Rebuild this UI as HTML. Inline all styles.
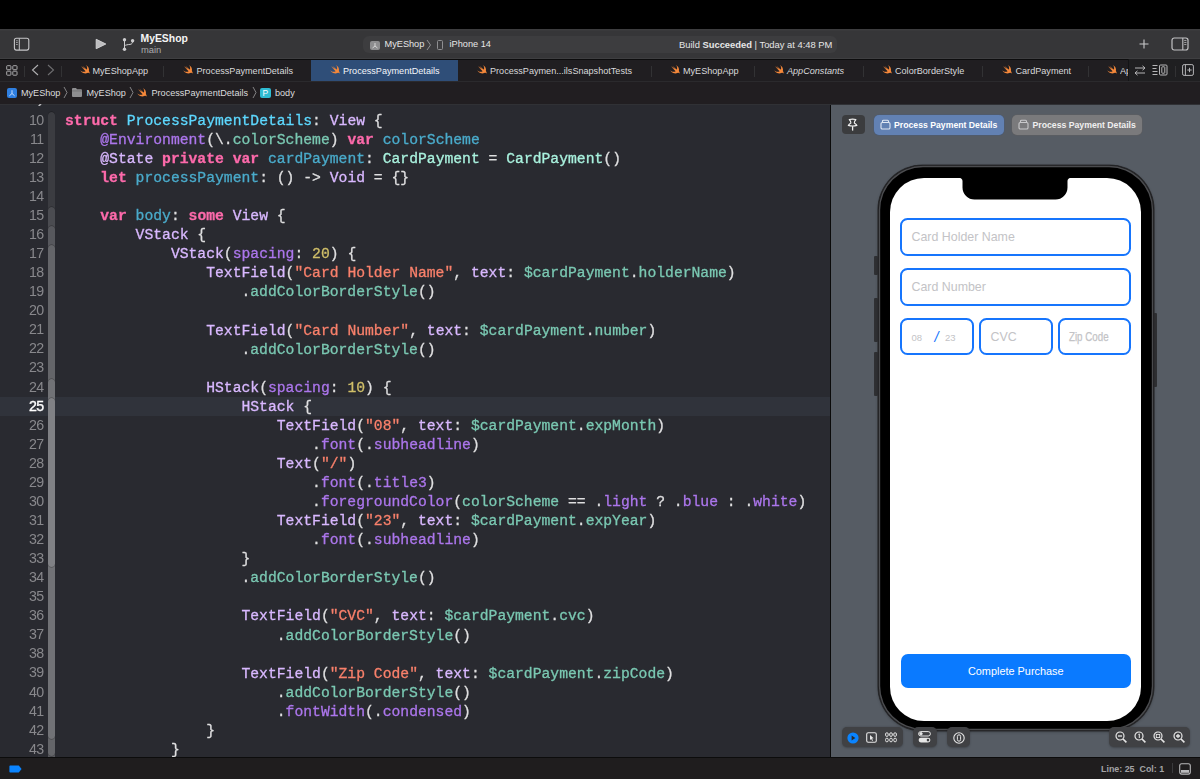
<!DOCTYPE html>
<html><head><meta charset="utf-8">
<style>
*{margin:0;padding:0;box-sizing:border-box}
html,body{width:1200px;height:779px;overflow:hidden;background:#000}
body{position:relative;font-family:"Liberation Sans",sans-serif;color:#ddd}
.abs{position:absolute}
#toolbar{left:0;top:29px;width:1200px;height:30px;background:#363638;box-shadow:inset 0 1.5px 0 #3d3d3f, inset 0 -1px 0 #3f3f41}
#tabs{left:0;top:59px;width:1200px;height:22px;background:#201e21;box-shadow:inset 0 1px 0 #0d0d0e}
#crumbs{left:0;top:81px;width:1200px;height:24px;background:#211e21;border-top:1px solid #2b2a2d;border-bottom:1px solid #303135}
#code{left:0;top:105px;width:830px;height:652px;background:#292a30;overflow:hidden}
#divider{left:830px;top:105px;width:1px;height:652px;background:#0a0a0a}
#preview{left:831px;top:105px;width:369px;height:652px;background:#565c64;overflow:hidden}
#status{left:0;top:757px;width:1200px;height:22px;background:#1f1d1e;border-top:1px solid #0c0c0c}
.curline{position:absolute;left:0;width:830px;height:19.06px;background:#30333b}
.ln{position:absolute;left:0;width:43.5px;height:19.06px;line-height:19.06px;text-align:right;font-family:"Liberation Sans",sans-serif;font-size:14.2px;letter-spacing:-0.6px;color:#88888c}
.ln.cur{color:#fff;-webkit-text-stroke:0.35px #fff}
.cl{position:absolute;left:65px;height:19.06px;line-height:19.06px;white-space:pre;font-family:"Liberation Mono",monospace;font-size:14.71px;color:#dfdfe0;-webkit-text-stroke:0.3px currentColor}
.k{color:#fd6aab;font-weight:bold}
.s{color:#f9806b}
.n{color:#d0bf69}
.td{color:#5dd8ff}
.od{color:#4aabcb}
.pt{color:#a9f2de}
.pf{color:#7ac8b2}
.ot{color:#d9b8ff}
.of{color:#ac76ec}
.sep{top:6.5px;width:1px;height:11px;background:#323234}
.sw{top:6px;width:10px;height:9px}
.tt{top:6.7px;font-size:9.1px;color:#d9d9db;white-space:nowrap}
.ct{top:5.6px;font-size:9.1px;color:#dcdcde;white-space:nowrap}
.chev{top:4px;width:6px;height:13px}
.pbt{top:15.1px;font-size:8.7px;font-weight:bold;color:#fff;white-space:nowrap}
.sbtn{width:4px;background:#2f3033;border-radius:1px}
.fld{border:2px solid #1675fd;border-radius:7.5px}
.ph{position:absolute;top:0;line-height:35px;font-size:12.4px;color:#c3c3c6;white-space:nowrap}
.ph.sm{font-size:9.5px}
.ph.cond{font-size:12.2px;transform:scaleX(0.8);transform-origin:0 50%;-webkit-text-stroke:0.25px #c3c3c6}
.ctl{height:19.5px;background:#404144;border-radius:5px;box-shadow:0 0.5px 2px rgba(0,0,0,0.25)}
.mag{top:625.5px;width:12px;height:12px}
.rib{position:absolute;left:47.5px;width:7px;border-radius:3.5px;box-shadow:0 -0.6px 0 rgba(0,0,0,0.4),0 0.6px 0 rgba(0,0,0,0.4)}
.cl,.ln{will-change:transform}

</style></head>
<body>
<svg width="0" height="0" style="position:absolute">
<defs>
<symbol id="swift" viewBox="2.2 3.2 18.6 17.4"><path fill="#f5883a" d="M13.543 3.41c4.114 2.47 6.545 7.162 5.549 11.131-.024.093-.05.181-.076.272l.002.001c2.062 2.538 1.5 5.258 1.236 4.745-1.072-2.086-3.066-1.568-4.088-1.043a6.803 6.803 0 0 1-.281.158l-.02.012-.002.002c-2.115 1.123-4.957 1.205-7.812-.022a12.568 12.568 0 0 1-5.64-4.838c.649.48 1.35.902 2.097 1.252 3.019 1.414 6.051 1.311 8.197-.002C9.651 12.73 7.101 9.670 5.146 7.191a10.628 10.628 0 0 1-1.005-1.384c2.340 2.142 6.038 4.830 7.365 5.576C8.690 8.408 6.208 4.743 6.324 4.860c4.436 4.470 8.528 6.996 8.528 6.996.154.085.270.154.360.213.085-.215.160-.437.224-.668.708-2.588-.090-5.548-1.893-7.992z"/></symbol>
<symbol id="magm" viewBox="0 0 12 12"><g fill="none" stroke="#e6e6e6" stroke-width="1.2"><circle cx="5" cy="5" r="4"/><path d="M8 8l3.4 3.4" stroke-width="1.6"/></g><path d="M3 5h4" stroke="#e6e6e6" stroke-width="1.3"/></symbol>
<symbol id="mag1" viewBox="0 0 12 12"><g fill="none" stroke="#e6e6e6" stroke-width="1.2"><circle cx="5" cy="5" r="4"/><path d="M8 8l3.4 3.4" stroke-width="1.6"/></g><path d="M4.4 3.4L5.3 2.9V7" fill="none" stroke="#e6e6e6" stroke-width="1"/></symbol>
<symbol id="magf" viewBox="0 0 12 12"><g fill="none" stroke="#e6e6e6" stroke-width="1.2"><circle cx="5" cy="5" r="4"/><path d="M8 8l3.4 3.4" stroke-width="1.6"/></g><rect x="3.3" y="3.4" width="3.4" height="3.2" fill="none" stroke="#e6e6e6" stroke-width="0.9"/></symbol>
<symbol id="magp" viewBox="0 0 12 12"><g fill="none" stroke="#e6e6e6" stroke-width="1.2"><circle cx="5" cy="5" r="4"/><path d="M8 8l3.4 3.4" stroke-width="1.6"/></g><path d="M3 5h4M5 3v4" stroke="#e6e6e6" stroke-width="1.3"/></symbol>
</defs>
</svg>
<div id="toolbar" class="abs">
  <svg class="abs" style="left:13px;top:8px" width="17" height="14" viewBox="0 0 17 14"><rect x="1.4" y="1.3" width="14.4" height="11.8" rx="2" fill="none" stroke="#c6c6c8" stroke-width="1.1"/><line x1="6.3" y1="1.3" x2="6.3" y2="13.1" stroke="#c6c6c8" stroke-width="1"/><rect x="3" y="3.4" width="1.8" height="0.8" fill="#b0b0b2"/><rect x="3" y="5.2" width="1.8" height="0.8" fill="#b0b0b2"/><rect x="3" y="7" width="1.8" height="0.8" fill="#b0b0b2"/></svg>
  <svg class="abs" style="left:95px;top:9px" width="12" height="12" viewBox="0 0 12 12"><path d="M1.2 1.3L10.8 6 1.2 10.7z" fill="#bdbdbf" stroke="#cfcfd1" stroke-width="1" stroke-linejoin="round"/></svg>
  <svg class="abs" style="left:121px;top:8px" width="14" height="14" viewBox="0 0 14 14"><g fill="#cdcdcf"><circle cx="3.5" cy="2.7" r="1.7"/><circle cx="3.5" cy="12.3" r="1.7"/><circle cx="11.6" cy="3.8" r="1.7"/></g><path d="M3.5 2.7V12.3M3.5 8.6C5 8 6.5 7.6 9 7.4 11 7.2 11.6 6 11.6 3.8" fill="none" stroke="#cdcdcf" stroke-width="1"/></svg>
  <div class="abs" style="left:140.5px;top:3.8px;font-size:10.4px;font-weight:bold;color:#f4f4f4">MyEShop</div>
  <div class="abs" style="left:141px;top:15px;font-size:9.4px;color:#ababad">main</div>
  <div class="abs" style="left:363px;top:7px;width:474px;height:17px;background:#3d3d3f;border-radius:6px"></div>
  <div class="abs" style="left:370px;top:11.5px;width:9.5px;height:9px;background:#8d8d8f;border-radius:2px"></div>
  <svg class="abs" style="left:370px;top:11.5px" width="10" height="9" viewBox="0 0 10 9"><g stroke="#dcdcdc" stroke-width="0.9" fill="none"><path d="M5 2v3M5 5L2.5 7M5 5l2.5 2"/></g></svg>
  <div class="abs" style="left:384.5px;top:10.4px;font-size:9.2px;color:#e6e6e6">MyEShop</div>
  <svg class="abs" style="left:426px;top:10px" width="6" height="12" viewBox="0 0 6 12"><path d="M1 1l3.5 5L1 11" fill="none" stroke="#9a9a9c" stroke-width="0.9"/></svg>
  <div class="abs" style="left:437px;top:11px;width:6px;height:10px;border:1.1px solid #8f8f91;border-radius:1.5px"></div>
  <div class="abs" style="left:449.5px;top:10.4px;font-size:9.2px;color:#e6e6e6">iPhone 14</div>
  <div class="abs" style="left:679px;top:10.2px;font-size:9.4px;color:#e6e6e6;white-space:nowrap">Build <b>Succeeded</b> | Today at 4:48 PM</div>
  <svg class="abs" style="left:1139px;top:10px" width="10" height="10" viewBox="0 0 10 10"><path d="M5 0.5v9M0.5 5h9" stroke="#c9c9cb" stroke-width="1.1"/></svg>
  <svg class="abs" style="left:1171px;top:8px" width="18" height="14" viewBox="0 0 18 14"><rect x="1" y="1" width="16" height="12" rx="2.2" fill="none" stroke="#c2c2c4" stroke-width="1.2"/><line x1="11.8" y1="1" x2="11.8" y2="13" stroke="#c2c2c4" stroke-width="1.1"/><rect x="13.2" y="3" width="2.2" height="0.9" fill="#a9a9ab"/><rect x="13.2" y="5" width="2.2" height="0.9" fill="#a9a9ab"/><rect x="13.2" y="7" width="2.2" height="0.9" fill="#a9a9ab"/></svg>
</div>
<div id="tabs" class="abs">
  <svg class="abs" style="left:6px;top:6px" width="12" height="11" viewBox="0 0 12 11"><g fill="none" stroke="#a9a9ab" stroke-width="1"><rect x="0.7" y="0.7" width="4.2" height="4" rx="0.6"/><rect x="6.8" y="0.7" width="4.2" height="4" rx="0.6"/><rect x="0.7" y="6.2" width="4.2" height="4" rx="0.6"/><rect x="6.8" y="6.2" width="4.2" height="4" rx="0.6"/></g></svg>
  <div class="abs sep" style="left:24px"></div>
  <svg class="abs" style="left:31px;top:5px" width="8" height="12" viewBox="0 0 8 12"><path d="M7 1L1.5 6 7 11" fill="none" stroke="#b0b0b2" stroke-width="1.1"/></svg>
  <svg class="abs" style="left:47px;top:5px" width="8" height="12" viewBox="0 0 8 12"><path d="M1 1l5.5 5L1 11" fill="none" stroke="#6e6e70" stroke-width="1.1"/></svg>
  <div class="abs sep" style="left:60.5px"></div>
  <svg class="abs sw" style="left:79.5px"><use href="#swift"/></svg><div class="abs tt" style="left:92.5px">MyEShopApp</div>
  <div class="abs sep" style="left:163px"></div>
  <svg class="abs sw" style="left:183px"><use href="#swift"/></svg><div class="abs tt" style="left:196.5px">ProcessPaymentDetails</div>
  <div class="abs" style="left:311px;top:1px;width:147px;height:22px;background:#2f4e78"></div>
  <svg class="abs sw" style="left:330px"><use href="#swift"/></svg><div class="abs tt" style="left:343px;color:#f4f6fa">ProcessPaymentDetails</div>
  <svg class="abs sw" style="left:476.5px"><use href="#swift"/></svg><div class="abs tt" style="left:490px">ProcessPaymen...ilsSnapshotTests</div>
  <div class="abs sep" style="left:651px"></div>
  <svg class="abs sw" style="left:670px"><use href="#swift"/></svg><div class="abs tt" style="left:683px">MyEShopApp</div>
  <div class="abs sep" style="left:754px"></div>
  <svg class="abs sw" style="left:774px"><use href="#swift"/></svg><div class="abs tt" style="left:787px;font-style:italic">AppConstants</div>
  <div class="abs sep" style="left:862.5px"></div>
  <svg class="abs sw" style="left:881.5px"><use href="#swift"/></svg><div class="abs tt" style="left:895px">ColorBorderStyle</div>
  <div class="abs sep" style="left:982px"></div>
  <svg class="abs sw" style="left:1001.5px"><use href="#swift"/></svg><div class="abs tt" style="left:1015.5px">CardPayment</div>
  <div class="abs sep" style="left:1087.5px"></div>
  <svg class="abs sw" style="left:1106.5px"><use href="#swift"/></svg><div class="abs tt" style="left:1120px;width:7.5px;overflow:hidden">AppConstants</div>
  <div class="abs" style="left:1127.5px;top:0;width:73px;height:22px;background:#1f1f21;border-left:1px solid #141416"></div>
  <svg class="abs" style="left:1134px;top:6px" width="12" height="11" viewBox="0 0 12 11"><g fill="none" stroke="#b5b5b7" stroke-width="1"><path d="M1 3h10M8.5 0.8L11 3 8.5 5.2M11 8H1M3.5 5.8L1 8l2.5 2.2"/></g></svg>
  <svg class="abs" style="left:1152px;top:5px" width="16" height="12" viewBox="0 0 16 12"><g fill="none" stroke="#b5b5b7" stroke-width="1"><path d="M0.5 1.5h5M0.5 4.5h4M0.5 7.5h5M0.5 10.5h5"/><rect x="7.5" y="1" width="7.5" height="10" rx="1"/><rect x="9.8" y="2.8" width="3" height="6.4" rx="0.6"/></g></svg>
  <div class="abs sep" style="left:1175px"></div>
  <svg class="abs" style="left:1181.5px;top:5px" width="12" height="12" viewBox="0 0 12 12"><g fill="none" stroke="#b5b5b7" stroke-width="1"><rect x="0.6" y="0.6" width="10.8" height="10.8" rx="1.5"/><path d="M3.4 0.6v10.8M7.5 3.8v4.4M5.3 6h4.4"/></g></svg>
</div>
<div id="crumbs" class="abs">
  <div class="abs" style="left:6.5px;top:5.5px;width:10px;height:10.5px;background:#2f7fe0;border-radius:2px"></div>
  <svg class="abs" style="left:6.5px;top:5.5px" width="10" height="10.5" viewBox="0 0 10 10.5"><g stroke="#d8e8ff" stroke-width="0.9" fill="none"><path d="M5 2.2v3.3M5 5.5L2.4 7.8M5 5.5l2.6 2.3"/></g></svg>
  <div class="abs ct" style="left:21px">MyEShop</div>
  <svg class="abs chev" style="left:63px"><path d="M1 1l3 5.5L1 12" fill="none" stroke="#8f8f91" stroke-width="0.9"/></svg>
  <svg class="abs" style="left:72px;top:6px" width="10" height="9" viewBox="0 0 10 9"><path d="M0 1a1 1 0 0 1 1-1h3l1 1.2h4a1 1 0 0 1 1 1V8a1 1 0 0 1-1 1H1a1 1 0 0 1-1-1z" fill="#8e8e90"/><rect x="0" y="2.6" width="10" height="0.7" fill="#6a6a6c"/></svg>
  <div class="abs ct" style="left:86.5px">MyEShop</div>
  <svg class="abs chev" style="left:128.5px"><path d="M1 1l3 5.5L1 12" fill="none" stroke="#8f8f91" stroke-width="0.9"/></svg>
  <svg class="abs sw" style="left:137px;top:6px"><use href="#swift"/></svg>
  <div class="abs ct" style="left:151.5px">ProcessPaymentDetails</div>
  <svg class="abs chev" style="left:252px"><path d="M1 1l3 5.5L1 12" fill="none" stroke="#8f8f91" stroke-width="0.9"/></svg>
  <div class="abs" style="left:260px;top:5.5px;width:10.5px;height:10.5px;background:#2fbcd2;border-radius:2px;color:#fff;font-size:8.5px;line-height:10.5px;text-align:center">P</div>
  <div class="abs ct" style="left:275px">body</div>
</div>
<div id="code" class="abs">
<div class="curline" style="top:291.60px"></div>
<div class="rib" style="top:6.70px;height:693.30px;background:#3b3c41"></div>
<div class="rib" style="top:102.00px;height:598.00px;background:#4b4c51"></div>
<div class="rib" style="top:121.06px;height:578.94px;background:#57585d"></div>
<div class="rib" style="top:140.12px;height:510.88px;background:#646569"></div>
<div class="rib" style="top:273.54px;height:360.14px;background:#717276"></div>
<div class="rib" style="top:292.60px;height:169.54px;background:#808185"></div>
<div class="ln" style="top:5.70px">10</div>
<div class="cl" style="top:6.90px"><span class="k">struct</span> <span class="td">ProcessPaymentDetails</span>: <span class="ot">View</span> {</div>
<div class="ln" style="top:24.76px">11</div>
<div class="cl" style="top:25.96px">    <span class="of">@Environment</span>(\.<span class="pf">colorScheme</span>) <span class="k">var</span> <span class="od">colorScheme</span></div>
<div class="ln" style="top:43.82px">12</div>
<div class="cl" style="top:45.02px">    <span class="ot">@State</span> <span class="k">private</span> <span class="k">var</span> <span class="od">cardPayment</span>: <span class="pt">CardPayment</span> = <span class="pt">CardPayment</span>()</div>
<div class="ln" style="top:62.88px">13</div>
<div class="cl" style="top:64.08px">    <span class="k">let</span> <span class="od">processPayment</span>: () -&gt; <span class="ot">Void</span> = {}</div>
<div class="ln" style="top:81.94px">14</div>
<div class="cl" style="top:83.14px"></div>
<div class="ln" style="top:101.00px">15</div>
<div class="cl" style="top:102.20px">    <span class="k">var</span> <span class="od">body</span>: <span class="k">some</span> <span class="ot">View</span> {</div>
<div class="ln" style="top:120.06px">16</div>
<div class="cl" style="top:121.26px">        <span class="ot">VStack</span> {</div>
<div class="ln" style="top:139.12px">17</div>
<div class="cl" style="top:140.32px">            <span class="ot">VStack</span>(<span class="of">spacing</span>: <span class="n">20</span>) {</div>
<div class="ln" style="top:158.18px">18</div>
<div class="cl" style="top:159.38px">                <span class="ot">TextField</span>(<span class="s">"Card Holder Name"</span>, <span class="ot">text</span>: <span class="pf">$cardPayment</span>.<span class="pf">holderName</span>)</div>
<div class="ln" style="top:177.24px">19</div>
<div class="cl" style="top:178.44px">                    .<span class="pf">addColorBorderStyle</span>()</div>
<div class="ln" style="top:196.30px">20</div>
<div class="cl" style="top:197.50px"></div>
<div class="ln" style="top:215.36px">21</div>
<div class="cl" style="top:216.56px">                <span class="ot">TextField</span>(<span class="s">"Card Number"</span>, <span class="ot">text</span>: <span class="pf">$cardPayment</span>.<span class="pf">number</span>)</div>
<div class="ln" style="top:234.42px">22</div>
<div class="cl" style="top:235.62px">                    .<span class="pf">addColorBorderStyle</span>()</div>
<div class="ln" style="top:253.48px">23</div>
<div class="cl" style="top:254.68px"></div>
<div class="ln" style="top:272.54px">24</div>
<div class="cl" style="top:273.74px">                <span class="ot">HStack</span>(<span class="of">spacing</span>: <span class="n">10</span>) {</div>
<div class="ln cur" style="top:291.60px">25</div>
<div class="cl" style="top:292.80px">                    <span class="ot">HStack</span> {</div>
<div class="ln" style="top:310.66px">26</div>
<div class="cl" style="top:311.86px">                        <span class="ot">TextField</span>(<span class="s">"08"</span>, <span class="ot">text</span>: <span class="pf">$cardPayment</span>.<span class="pf">expMonth</span>)</div>
<div class="ln" style="top:329.72px">27</div>
<div class="cl" style="top:330.92px">                            .<span class="of">font</span>(.<span class="of">subheadline</span>)</div>
<div class="ln" style="top:348.78px">28</div>
<div class="cl" style="top:349.98px">                        <span class="ot">Text</span>(<span class="s">"/"</span>)</div>
<div class="ln" style="top:367.84px">29</div>
<div class="cl" style="top:369.04px">                            .<span class="of">font</span>(.<span class="of">title3</span>)</div>
<div class="ln" style="top:386.90px">30</div>
<div class="cl" style="top:388.10px">                            .<span class="of">foregroundColor</span>(<span class="pf">colorScheme</span> == .<span class="of">light</span> ? .<span class="of">blue</span> : .<span class="of">white</span>)</div>
<div class="ln" style="top:405.96px">31</div>
<div class="cl" style="top:407.16px">                        <span class="ot">TextField</span>(<span class="s">"23"</span>, <span class="ot">text</span>: <span class="pf">$cardPayment</span>.<span class="pf">expYear</span>)</div>
<div class="ln" style="top:425.02px">32</div>
<div class="cl" style="top:426.22px">                            .<span class="of">font</span>(.<span class="of">subheadline</span>)</div>
<div class="ln" style="top:444.08px">33</div>
<div class="cl" style="top:445.28px">                    }</div>
<div class="ln" style="top:463.14px">34</div>
<div class="cl" style="top:464.34px">                    .<span class="pf">addColorBorderStyle</span>()</div>
<div class="ln" style="top:482.20px">35</div>
<div class="cl" style="top:483.40px"></div>
<div class="ln" style="top:501.26px">36</div>
<div class="cl" style="top:502.46px">                    <span class="ot">TextField</span>(<span class="s">"CVC"</span>, <span class="ot">text</span>: <span class="pf">$cardPayment</span>.<span class="pf">cvc</span>)</div>
<div class="ln" style="top:520.32px">37</div>
<div class="cl" style="top:521.52px">                        .<span class="pf">addColorBorderStyle</span>()</div>
<div class="ln" style="top:539.38px">38</div>
<div class="cl" style="top:540.58px"></div>
<div class="ln" style="top:558.44px">39</div>
<div class="cl" style="top:559.64px">                    <span class="ot">TextField</span>(<span class="s">"Zip Code"</span>, <span class="ot">text</span>: <span class="pf">$cardPayment</span>.<span class="pf">zipCode</span>)</div>
<div class="ln" style="top:577.50px">40</div>
<div class="cl" style="top:578.70px">                        .<span class="pf">addColorBorderStyle</span>()</div>
<div class="ln" style="top:596.56px">41</div>
<div class="cl" style="top:597.76px">                        .<span class="of">fontWidth</span>(.<span class="of">condensed</span>)</div>
<div class="ln" style="top:615.62px">42</div>
<div class="cl" style="top:616.82px">                }</div>
<div class="ln" style="top:634.68px">43</div>
<div class="cl" style="top:635.88px">            }</div>
</div>
<div id="divider" class="abs"></div>
<div class="abs" style="left:38.5px;top:103.6px;width:2.2px;height:1.6px;background:#bdbdc0;transform:skewX(-40deg)"></div>
<div id="preview" class="abs">
  <div class="abs" style="left:11px;top:10px;width:23px;height:19px;background:#3b3c3e;border-radius:4px"></div>
  <svg class="abs" style="left:16px;top:13px" width="12" height="14" viewBox="0 0 12 14"><path d="M2.3 1.5Q5.6 0.9 8.9 1.5 7.3 3.2 7.3 4.9 9.5 6.3 9.9 7.4 5.6 8.6 1.3 7.4 1.7 6.3 3.9 4.9 3.9 3.2 2.3 1.5Z" fill="none" stroke="#f2f2f2" stroke-width="1.15" stroke-linejoin="round"/><path d="M5.6 8.2V12.6" stroke="#f2f2f2" stroke-width="1.3"/></svg>
  <div class="abs" style="left:42.5px;top:9.5px;width:130.5px;height:20px;background:#6281b3;border-radius:5px;box-shadow:0 0 0 0.5px #4a5a74"></div>
  <svg class="abs" style="left:48.5px;top:14px" width="11" height="11" viewBox="0 0 11 11"><g fill="none" stroke="#dfe6f2" stroke-width="1.1"><rect x="1" y="3.5" width="9" height="6.5" rx="1.3"/><path d="M2.5 3.5V2.2a1 1 0 0 1 1-1h4a1 1 0 0 1 1 1v1.3"/></g></svg>
  <div class="abs pbt" style="left:63px">Process Payment Details</div>
  <div class="abs" style="left:180.5px;top:9.5px;width:130.5px;height:20px;background:#7a7a7c;border-radius:5px;box-shadow:0 0 0 0.5px #5e5e60"></div>
  <svg class="abs" style="left:186.5px;top:14px" width="11" height="11" viewBox="0 0 11 11"><g fill="none" stroke="#c9c9cb" stroke-width="1.1"><rect x="1" y="3.5" width="9" height="6.5" rx="1.3"/><path d="M2.5 3.5V2.2a1 1 0 0 1 1-1h4a1 1 0 0 1 1 1v1.3"/></g></svg>
  <div class="abs pbt" style="left:201.5px;color:#f0f0f0">Process Payment Details</div>

  <div class="abs sbtn" style="left:42.5px;top:151px;height:19px"></div>
  <div class="abs sbtn" style="left:42.5px;top:193px;height:44px"></div>
  <div class="abs sbtn" style="left:42.5px;top:247px;height:44px"></div>
  <div class="abs sbtn" style="left:321.5px;top:207.5px;height:74px;width:4px"></div>
  <div class="abs" style="left:47px;top:60px;width:275.5px;height:566px;background:#000;border-radius:45px;box-shadow:inset 0 0 0 0.8px #1c1c1e, inset 0 0 0 2.2px #4a4b4e, 0 0 0 0.6px #2c2d30, 0 1px 3px rgba(0,0,0,0.3)"></div>
  <div class="abs" id="screen" style="left:59px;top:72.5px;width:251px;height:543px;background:#fff;border-radius:34px;overflow:hidden">
    <svg class="abs" style="left:69px;top:-1px" width="112" height="24" viewBox="0 0 112 24"><path d="M0 0H112V1A3 3 0 0 0 108.5 4V10.5A12 12 0 0 1 96.5 22.5H15.5A12 12 0 0 1 3.5 10.5V4A3 3 0 0 0 0 1z" fill="#000"/></svg>
    <div class="abs fld" style="left:10px;top:40px;width:231px;height:38px"><span class="ph" style="left:9.5px">Card Holder Name</span></div>
    <div class="abs fld" style="left:10px;top:90.5px;width:231px;height:38px"><span class="ph" style="left:9.5px">Card Number</span></div>
    <div class="abs fld" style="left:10px;top:140.5px;width:73.5px;height:37px"><span class="ph sm" style="left:9.5px">08</span><span class="ph" style="left:32.5px;color:#1675fd;font-size:14.5px;font-style:italic">/</span><span class="ph sm" style="left:43px">23</span></div>
    <div class="abs fld" style="left:89px;top:140.5px;width:73.5px;height:37px"><span class="ph" style="left:9.5px">CVC</span></div>
    <div class="abs fld" style="left:167.5px;top:140.5px;width:73.5px;height:37px"><span class="ph cond" style="left:9.5px">Zip Code</span></div>
    <div class="abs" style="left:10.5px;top:476.5px;width:230.5px;height:34px;background:#0a7aff;border-radius:7px;color:#fff;font-size:10.9px;line-height:34px;text-align:center">Complete Purchase</div>
  </div>

  <div class="abs ctl" style="left:10.5px;top:622px;width:61.5px"></div>
  <svg class="abs" style="left:15.5px;top:626.5px" width="12" height="12" viewBox="0 0 12 12"><circle cx="6" cy="6" r="5.6" fill="#0a84ff"/><path d="M4.6 3.6L8.4 6 4.6 8.4z" fill="#2a2a2a"/></svg>
  <svg class="abs" style="left:35px;top:627px" width="11" height="11" viewBox="0 0 11 11"><rect x="0.7" y="0.7" width="9.6" height="9.6" rx="1.5" fill="none" stroke="#e6e6e6" stroke-width="1.1"/><path d="M4 3l3.6 3.2-1.6.3 1 2-0.8.4-1-2L4 8z" fill="#e6e6e6"/></svg>
  <svg class="abs" style="left:53.5px;top:627px" width="12" height="11" viewBox="0 0 12 11"><g fill="none" stroke="#e6e6e6" stroke-width="1"><rect x="0.6" y="0.8" width="2.6" height="3.6" rx="1.2"/><rect x="4.7" y="0.8" width="2.6" height="3.6" rx="1.2"/><rect x="8.8" y="0.8" width="2.6" height="3.6" rx="1.2"/><rect x="0.6" y="6.2" width="2.6" height="3.6" rx="1.2"/><rect x="4.7" y="6.2" width="2.6" height="3.6" rx="1.2"/><rect x="8.8" y="6.2" width="2.6" height="3.6" rx="1.2"/></g></svg>
  <div class="abs ctl" style="left:81.5px;top:622px;width:24px"></div>
  <svg class="abs" style="left:87px;top:626px" width="13" height="12" viewBox="0 0 13 12"><g fill="none" stroke="#e6e6e6" stroke-width="1"><rect x="0.6" y="0.6" width="11.8" height="4.4" rx="2.2"/><circle cx="3" cy="2.8" r="1.2" fill="#e6e6e6"/></g><rect x="0.6" y="6.8" width="11.8" height="4.6" rx="2.3" fill="#e6e6e6"/><circle cx="10" cy="9.1" r="1.3" fill="#404144"/></svg>
  <div class="abs ctl" style="left:115.5px;top:622px;width:23.5px"></div>
  <svg class="abs" style="left:121.5px;top:626.5px" width="12" height="12" viewBox="0 0 12 12"><circle cx="6" cy="6" r="5.2" fill="none" stroke="#e6e6e6" stroke-width="1.1"/><rect x="4.4" y="2.8" width="3.2" height="6.4" rx="1.6" fill="none" stroke="#e6e6e6" stroke-width="1"/></svg>
  <div class="abs ctl" style="left:278px;top:622px;width:81px"></div>
  <svg class="abs mag" style="left:284px"><use href="#magm"/></svg>
  <svg class="abs mag" style="left:303px"><use href="#mag1"/></svg>
  <svg class="abs mag" style="left:322px"><use href="#magf"/></svg>
  <svg class="abs mag" style="left:341.5px"><use href="#magp"/></svg>
</div>
<div id="status" class="abs">
  <svg class="abs" style="left:8.5px;top:7px" width="13" height="8" viewBox="0 0 13 8"><path d="M1.2 0.4h8.6l2.8 3.6-2.8 3.6H1.2A.8.8 0 0 1 .4 6.8V1.2A.8.8 0 0 1 1.2.4z" fill="#0a84ff"/></svg>
  <div class="abs" style="left:1101px;top:5.5px;font-size:8.9px;font-weight:bold;color:#a3a3a5;white-space:pre">Line: 25  Col: 1</div>
  <div class="abs" style="left:1172px;top:5px;width:1px;height:10px;background:#3a3a3c"></div>
  <svg class="abs" style="left:1179px;top:5px" width="12" height="12" viewBox="0 0 12 12"><rect x="0.7" y="0.7" width="10.6" height="10.4" rx="2" fill="none" stroke="#b9b9bb" stroke-width="1.1"/><rect x="2" y="7" width="8" height="2.8" fill="#b9b9bb"/></svg>
</div>

</body></html>
